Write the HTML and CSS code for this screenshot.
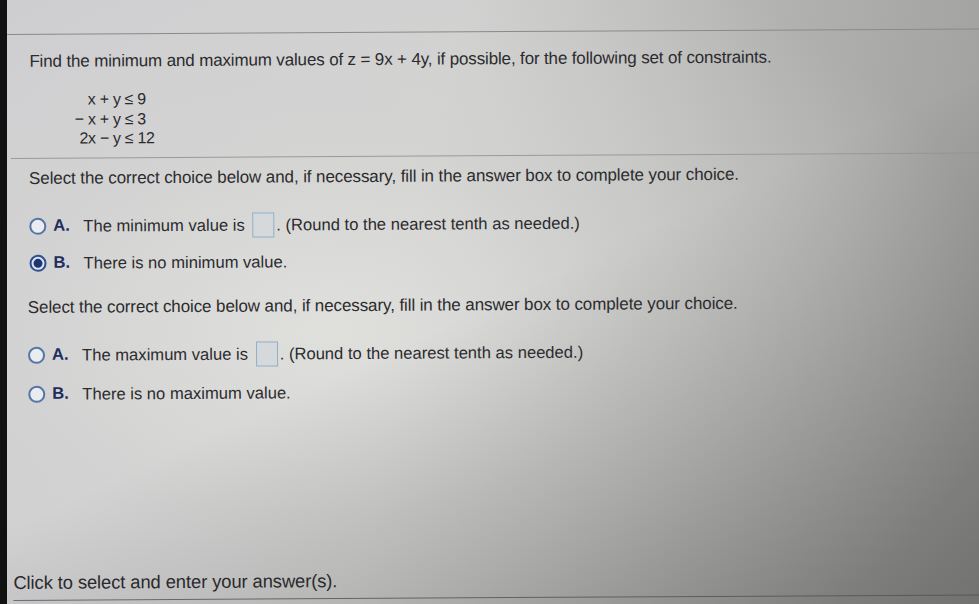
FILE: index.html
```html
<!DOCTYPE html>
<html>
<head>
<meta charset="utf-8">
<link rel="stylesheet" href="styles.css">
</head>
<body>
<div class="screen">
  <div class="page">
    <div class="topbar"></div>
    <div class="question">
      <p class="prompt">Find the minimum and maximum values of z = 9x + 4y, if possible, for the following set of constraints.</p>
      <div class="constraints">
        <span class="lhs">x + y</span><span class="rhs">≤ 9</span>
        <span class="lhs">− x + y</span><span class="rhs">≤ 3</span>
        <span class="lhs">2x − y</span><span class="rhs">≤ 12</span>
      </div>
    </div>
    <div class="answers">
      <p class="instr">Select the correct choice below and, if necessary, fill in the answer box to complete your choice.</p>
      <div class="options">
        <div class="opt"><span class="radio"></span><span class="letter">A.</span><span class="txt">The minimum value is <span class="box"></span>. (Round to the nearest tenth as needed.)</span></div>
        <div class="opt"><span class="radio on"></span><span class="letter">B.</span><span class="txt">There is no minimum value.</span></div>
      </div>
      <p class="instr second">Select the correct choice below and, if necessary, fill in the answer box to complete your choice.</p>
      <div class="options shifted">
        <div class="opt"><span class="radio"></span><span class="letter">A.</span><span class="txt">The maximum value is <span class="box"></span>. (Round to the nearest tenth as needed.)</span></div>
        <div class="opt"><span class="radio"></span><span class="letter">B.</span><span class="txt">There is no maximum value.</span></div>
      </div>
    </div>
    <div class="footer">Click to select and enter your answer(s).</div>
  </div>
</div>
</body>
</html>
```
FILE: styles.css
```css
html, body {
  margin: 0;
  padding: 0;
}
body {
  width: 979px;
  height: 604px;
  overflow: hidden;
  font-family: "Liberation Sans", Arial, sans-serif;
  color: #2b2b2e;
  background: #111;
}
.screen {
  margin-left: 7px;
  height: 604px;
  background:
    radial-gradient(ellipse 680px 420px at 320px 330px, rgba(224,224,221,0.95) 0%, rgba(214,214,212,0.6) 45%, rgba(200,200,200,0) 100%),
    linear-gradient(100deg, #cdcdd1 0%, #d0d0d0 42%, #b2b2b0 72%, #9c9c9a 100%);
  position: relative;
  overflow: hidden;
}
.screen::after {
  content: "";
  position: absolute;
  inset: 0;
  background: linear-gradient(155deg, rgba(0,0,0,0) 50%, rgba(55,55,53,0.42) 100%);
  pointer-events: none;
}
.page {
  height: 604px;
  display: flex;
  flex-direction: column;
  transform: rotate(-0.33deg);
  transform-origin: 0 0;
}
.topbar {
  height: 34px;
  flex: none;
  border-bottom: 1px solid #8a8a8e;
  margin-right: -20px;
}
.question {
  padding: 16px 0 0 22px;
  border-bottom: 1px solid #9a9a9c;
  margin-left: 3px;
  margin-right: -20px;
  height: 107px;
  box-sizing: content-box;
  flex: none;
}
.prompt {
  margin: 0;
  font-size: 17px;
  line-height: 22px;
  letter-spacing: -0.15px;
  margin-left: -3px;
}
.constraints {
  display: grid;
  grid-template-columns: 88px auto;
  column-gap: 4px;
  margin-top: 17px;
  font-size: 16px;
  line-height: 19.5px;
  letter-spacing: -0.3px;
}
.lhs { text-align: right; }
.answers {
  padding-left: 21px;
}
.instr {
  margin: 9px 0 0 0;
  font-size: 17px;
  line-height: 22px;
  letter-spacing: -0.1px;
}
.instr.second {
  margin-top: 21px;
  margin-left: -2px;
}
.options {
  margin-top: 24px;
  display: flex;
  flex-direction: column;
  gap: 12px;
  margin-left: 0;
}
.options.shifted { margin-left: -2px; margin-top: 24px; gap: 14px; }
.opt {
  display: flex;
  align-items: center;
  height: 25px;
  font-size: 16.6px;
}
.radio {
  width: 13px;
  height: 13px;
  border: 2px solid #5575a6;
  border-radius: 50%;
  flex: none;
  box-sizing: content-box;
  position: relative;
  background: #e9ecf0;
}
.radio.on {
  border-color: #2c4f8f;
  background: #dfe4ec;
}
.radio.on::after {
  content: "";
  position: absolute;
  left: 2px;
  top: 2px;
  width: 9px;
  height: 9px;
  border-radius: 50%;
  background: #1d3575;
}
.letter {
  font-weight: bold;
  color: #1f2d5c;
  margin-left: 7px;
  width: 30px;
  position: relative;
  top: -1px;
}
.txt {
  display: flex;
  align-items: center;
  white-space: pre;
}
.box {
  display: inline-block;
  width: 20px;
  height: 23px;
  border: 1px solid #8fb0c8;
  background: #d6d9dc;
  margin: 0 2px 0 3px;
}
.footer {
  margin-top: auto;
  margin-left: 3px;
  height: 28px;
  font-size: 18.4px;
  line-height: 22px;
  letter-spacing: -0.1px;
  border-bottom: 1px solid #6e6e6e;
  margin-right: -20px;
  margin-bottom: 3px;
  color: #28282b;
}
```
